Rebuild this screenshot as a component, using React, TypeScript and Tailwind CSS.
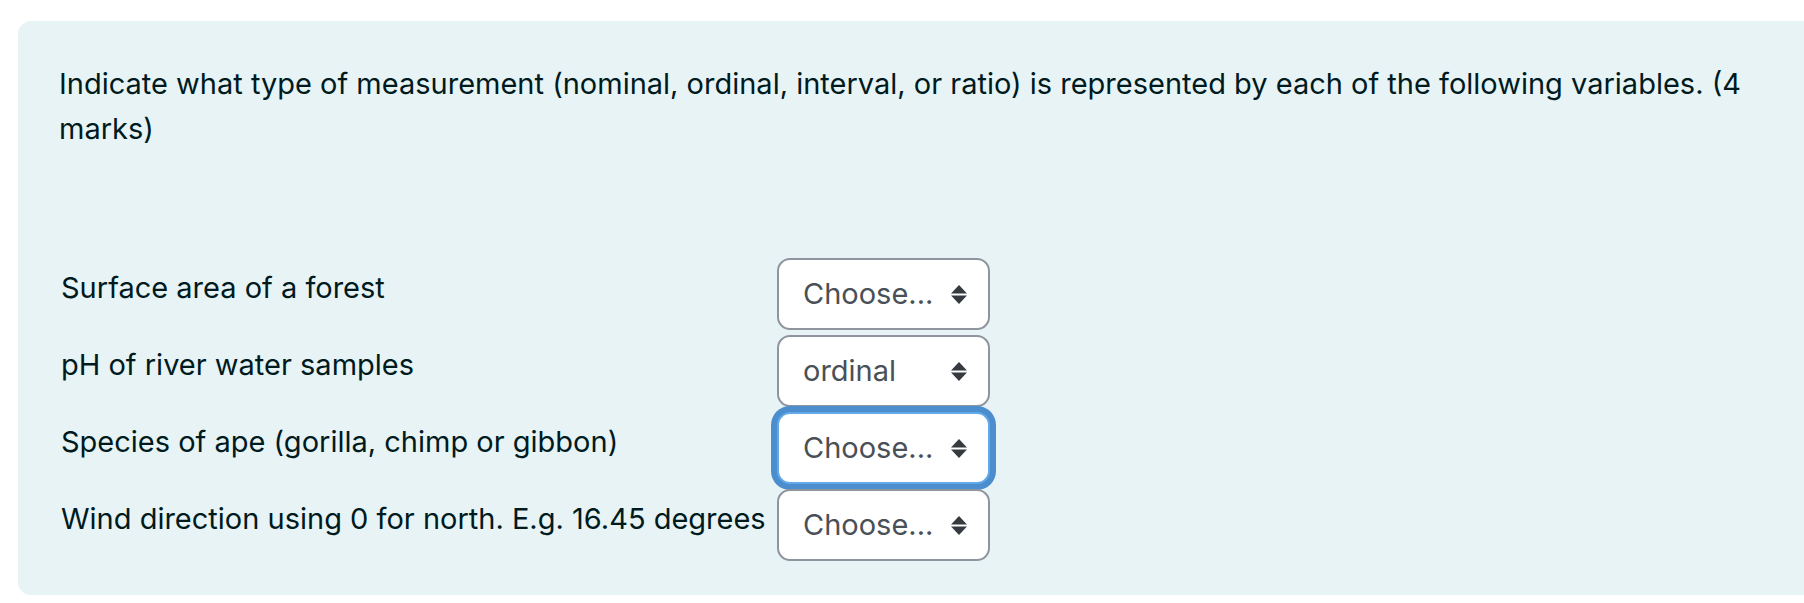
import React from "react";

const rows = [
  { label: "Surface area of a forest", value: "Choose...", focused: false },
  { label: "pH of river water samples", value: "ordinal", focused: false },
  { label: "Species of ape (gorilla, chimp or gibbon)", value: "Choose...", focused: true },
  { label: "Wind direction using 0 for north. E.g. 16.45 degrees", value: "Choose...", focused: false },
];

function UpDown() {
  return (
    <svg width="16" height="19" viewBox="0 0 16 19" className="shrink-0">
      <path d="M0 8.5 L8 0 L16 8.5 Z" fill="#343a40" />
      <path d="M0 10.5 L16 10.5 L8 19 Z" fill="#343a40" />
    </svg>
  );
}

function FakeSelect({ value, focused }: { value: string; focused: boolean }) {
  return (
    <div
      className={
        focused
          ? "flex h-[72px] w-[213px] items-center justify-between rounded-[13px] border-2 border-[#62a9ea] bg-white pl-[24px] pr-[21px] text-[#495057] ring-[6px] ring-[#4b8dcd]"
          : "flex h-[72px] w-[213px] items-center justify-between rounded-[13px] border-2 border-[#8f959e] bg-white pl-[24px] pr-[21px] text-[#495057]"
      }
    >
      <span>{value}</span>
      <UpDown />
    </div>
  );
}

export default function App() {
  return (
    <div className="min-h-screen bg-white pl-[18px] pt-[21px] font-['Inter','Liberation_Sans',sans-serif] text-[29px] leading-[44px]">
      <div className="h-[574px] rounded-l-[13px] bg-[#e7f3f5] pl-[41px] pt-10 text-[#001a1e]">
        <p className="max-w-[1720px] leading-[45px]">
          Indicate what type of measurement (nominal, ordinal, interval, or ratio) is represented by each of the following
          variables. (4 marks)
        </p>
        <div className="mt-[107px] grid w-fit grid-cols-[718px_auto] gap-y-[5px]">
          {rows.map((r) => (
            <React.Fragment key={r.label}>
              <div className="whitespace-nowrap pl-[2px] pt-[8px]">{r.label}</div>
              <FakeSelect value={r.value} focused={r.focused} />
            </React.Fragment>
          ))}
        </div>
      </div>
    </div>
  );
}
